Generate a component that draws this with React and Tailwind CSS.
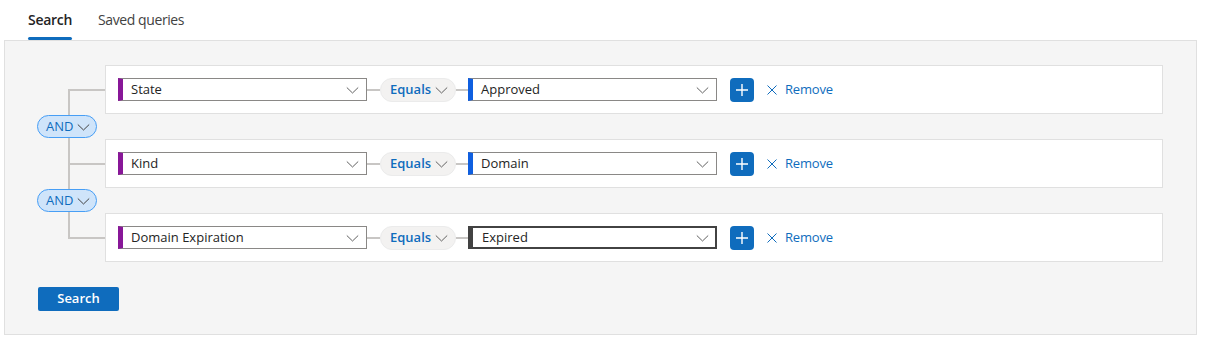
import React from "react";

const Chevron = ({ className = "" }) => (
  <svg width="13" height="12" viewBox="0 0 13 12" className={className}>
    <path d="M0.8 3.5 L6.5 9 L12.2 3.5" fill="none" stroke="currentColor" strokeWidth="1" />
  </svg>
);

const Dropdown = ({ value, bar, focused }) => (
  <div
    className={
      "flex items-center justify-between w-[249px] h-[23px] bg-white " +
      (focused
        ? "border-2 border-l-[5px] border-[#424242] pl-[9px] pr-[6px]"
        : "border border-[#8a8886] border-l-[5px] pl-[8px] pr-[7px] " + bar)
    }
  >
    <span className="text-[13px] text-[#242424] leading-none">{value}</span>
    <Chevron className="text-[#616161]" />
  </div>
);

const Row = ({ field, value, focused }) => (
  <div className="flex items-center h-[49px] bg-white border border-[#e0e0e0] pl-[12px]">
    <Dropdown value={field} bar="border-l-[#881798]" />
    <div className="w-[13px] h-[2px] bg-[#c8c6c4]" />
    <div className="flex items-center gap-[4px] h-[24px] w-[76px] pl-[9px] rounded-full bg-[#f3f2f1] border border-[#ebebeb]">
      <span className="text-[13px] font-semibold text-[#0f6cbd] leading-none">Equals</span>
      <Chevron className="text-[#616161]" />
    </div>
    <div className="w-[12px] h-[2px] bg-[#c8c6c4]" />
    <Dropdown value={value} bar="border-l-[#0f5fe0]" focused={focused} />
    <button className="ml-[13px] w-[24px] h-[24px] rounded-[4px] bg-[#0f6cbd] flex items-center justify-center">
      <svg width="14" height="14" viewBox="0 0 14 14">
        <path d="M7 1 V13 M1 7 H13" stroke="white" strokeWidth="1.4" />
      </svg>
    </button>
    <div className="ml-[13px] flex items-center gap-[8px] text-[#0f6cbd]">
      <svg width="10" height="10" viewBox="0 0 10 10">
        <path d="M0.5 0.5 L9.5 9.5 M9.5 0.5 L0.5 9.5" stroke="currentColor" strokeWidth="1" />
      </svg>
      <span className="text-[13px] leading-none tracking-[-0.2px]">Remove</span>
    </div>
  </div>
);

const AndPill = () => (
  <div className="flex items-center gap-[4px] w-[60px] h-[23px] pl-[8px] rounded-full bg-[#cfe4fa] border border-[#479ef5] text-[#0f6cbd]">
    <span className="text-[13px] leading-none">AND</span>
    <Chevron className="text-[#424242]" />
  </div>
);

const lineBg =
  "bg-[linear-gradient(to_right,transparent_31px,#c8c6c4_31px,#c8c6c4_33px,transparent_33px)]";

export default function App() {
  const rows = [
    { field: "State", value: "Approved" },
    { field: "Kind", value: "Domain" },
    { field: "Domain Expiration", value: "Expired", focused: true },
  ];

  return (
    <div className="w-[1206px] h-[348px] bg-white font-['Open_Sans',sans-serif] text-[#242424]">
      <div className="flex gap-[26px] pl-[28px] h-[40px]">
        <div className="flex flex-col justify-end">
          <span className="text-[14px] font-semibold leading-none mb-[10px] tracking-[-0.3px]">Search</span>
          <div className="h-[3px] bg-[#0f6cbd] rounded-full" />
        </div>
        <div className="flex flex-col justify-end">
          <span className="text-[14px] leading-none mb-[13px] text-[#424242] tracking-[-0.4px]">Saved queries</span>
        </div>
      </div>

      <div className="ml-[4px] mr-[9px] h-[295px] bg-[#f5f5f5] border border-[#e0e0e0] pl-[32px] pr-[33px] pt-[24px]">
        <div className="grid grid-cols-[68px_1fr] grid-rows-[49px_25px_49px_25px_49px]">
          {/* row 1 */}
          <div className="flex flex-col">
            <div className="h-[24px]" />
            <div className="flex-1 ml-[31px] border-l-2 border-t-2 border-[#c8c6c4]" />
          </div>
          <Row {...rows[0]} />
          <div className={"flex items-center " + lineBg}>
            <AndPill />
          </div>
          <div />
          {/* row 2 */}
          <div className={"flex items-center " + lineBg}>
            <div className="ml-[33px] flex-1 h-[2px] bg-[#c8c6c4]" />
          </div>
          <Row {...rows[1]} />
          <div className={"flex items-center " + lineBg}>
            <AndPill />
          </div>
          <div />
          {/* row 3 */}
          <div className="flex flex-col">
            <div className="h-[26px] ml-[31px] border-l-2 border-b-2 border-[#c8c6c4]" />
          </div>
          <Row {...rows[2]} />
        </div>

        <button className="mt-[25px] ml-[1px] w-[81px] h-[24px] rounded-[2px] bg-[#0f6cbd] text-white text-[13px] font-semibold">
          Search
        </button>
      </div>
    </div>
  );
}
